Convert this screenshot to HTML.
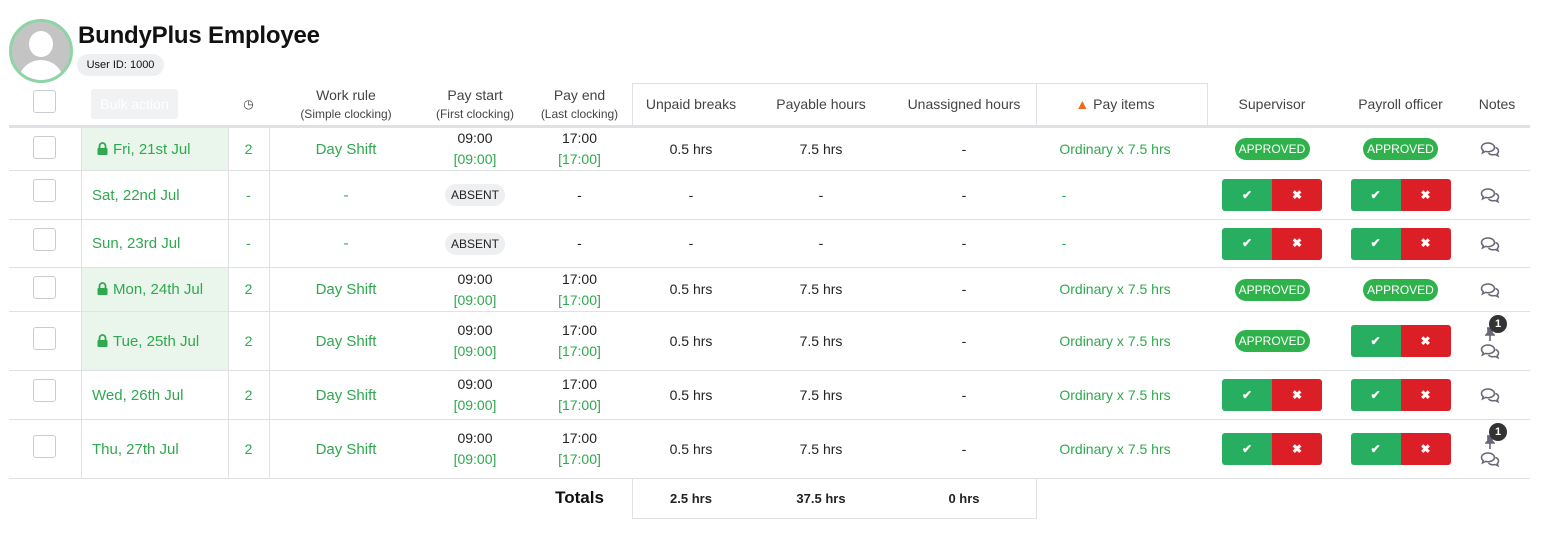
<!DOCTYPE html>
<html><head><meta charset="utf-8"><style>
*{box-sizing:border-box;margin:0;padding:0}
body{width:1551px;height:537px;background:#fff;font-family:"Liberation Sans",sans-serif;font-size:14px;color:#222;position:relative;overflow:hidden}
.a{position:absolute}
.r{position:absolute;left:9px;width:1521px;border-bottom:1px solid #dfe1e5}
.c{position:absolute;top:0;height:100%;display:flex;flex-direction:column;align-items:center;justify-content:center;text-align:center;line-height:21px}
.g{color:#2fa84f}
.cb{width:23px;height:23px;border:1px solid #c8ccd0;border-radius:3px;background:#fff}
.vl{position:absolute;top:0;height:100%;width:1px;background:#dfe1e5}
.ap{background:#2fb24c;color:#fff;font-size:12px;border-radius:11px;height:22px;width:75px;line-height:22px}
.ab{background:#eeeff1;color:#222;font-size:12px;border-radius:11px;height:22px;width:60px;line-height:22px}
.bt{display:flex;width:100px;height:32px;border-radius:3px;overflow:hidden}
.bt span{flex:1;color:#fff;font-size:12px;font-weight:bold;display:flex;align-items:center;justify-content:center}
.bt .y{background:#27ae60}.bt .n{background:#dc1f26}
.hd{position:absolute;top:0;height:100%;display:flex;flex-direction:column;align-items:center;justify-content:center;text-align:center;color:#444}
.sm{font-size:12px;margin-top:4px}
</style></head><body>
<div class="a" style="left:9px;top:19px;width:64px;height:64px;border-radius:50%;border:3px solid #8fd4a4;background:#c4c4c4;overflow:hidden">
<div class="a" style="left:17px;top:9px;width:24px;height:26px;border-radius:50%;background:#fff"></div>
<div class="a" style="left:6px;top:38px;width:46px;height:30px;border-radius:23px 23px 0 0;background:#fff"></div></div>
<div class="a" style="left:78px;top:22px;font-size:24px;font-weight:bold;color:#111;letter-spacing:-0.2px">BundyPlus Employee</div>
<div class="a" style="left:77px;top:54px;width:87px;height:22px;border-radius:11px;background:#eeeff1;font-size:11px;line-height:22px;text-align:center;color:#111">User ID: 1000</div>

<div class="a" style="left:632px;top:83px;width:576px;height:44px;border:1px solid #dfe1e5;border-bottom:none"></div>
<div class="a" style="left:1036px;top:83px;width:1px;height:44px;background:#dfe1e5"></div>
<div class="r" style="top:83px;height:45px;border-bottom:3px solid #dfe1e5">
<div class="a" style="left:24px;top:7px"><div class="cb"></div></div>
<div class="a" style="left:82px;top:6px;width:87px;height:30px;background:#f1f2f4;border-radius:3px;color:#fff;font-size:14px;line-height:30px;text-align:center">Bulk action</div>
<div class="hd" style="left:219px;width:41px"><span style="font-size:12px">◷</span></div>
<div class="hd" style="left:260px;width:154px"><div>Work rule</div><div class="sm">(Simple clocking)</div></div>
<div class="hd" style="left:414px;width:104px"><div>Pay start</div><div class="sm">(First clocking)</div></div>
<div class="hd" style="left:518px;width:105px"><div>Pay end</div><div class="sm">(Last clocking)</div></div>
<div class="hd" style="left:623px;width:118px">Unpaid breaks</div>
<div class="hd" style="left:741px;width:142px">Payable hours</div>
<div class="hd" style="left:883px;width:144px">Unassigned hours</div>
<div class="hd" style="left:1027px;width:158px"><div><span style="color:#f06a1d">▲</span> Pay items</div></div>
<div class="hd" style="left:1198px;width:130px">Supervisor</div>
<div class="hd" style="left:1328px;width:127px">Payroll officer</div>
<div class="hd" style="left:1455px;width:66px">Notes</div>
</div>

<div id="rows"></div>
<script>
const rows=[
[128,43,"Fri, 21st Jul",1,1,1,1,0],
[171,49,"Sat, 22nd Jul",0,0,0,0,0],
[220,48,"Sun, 23rd Jul",0,0,0,0,0],
[268,44,"Mon, 24th Jul",1,1,1,1,0],
[312,59,"Tue, 25th Jul",1,1,1,0,1],
[371,49,"Wed, 26th Jul",0,1,0,0,0],
[420,59,"Thu, 27th Jul",0,1,0,0,1]];
const btn='<div class="bt"><span class="y">✔</span><span class="n">✖</span></div>';
const ap='<div class="ap">APPROVED</div>';
const chat='<svg width="20" height="16" viewBox="0 0 20 16"><path d="M8 2C4 2 1.5 4 1.5 6.5c0 1.3.7 2.4 1.8 3.1L2.5 12l3-1.6c.8.2 1.6.3 2.5.3 4 0 6.5-2 6.5-4.2S12 2 8 2z" fill="#fff" stroke="#667" stroke-width="1.5"/><path d="M15.5 6.5c1.8.7 3 2 3 3.6 0 1-.5 1.9-1.3 2.5l.8 2.2-2.8-1.3c-.7.2-1.5.3-2.2.3-2 0-3.6-.7-4.5-1.8" fill="none" stroke="#667" stroke-width="1.5"/></svg>';
const pin='<svg width="10" height="14" viewBox="0 0 10 14"><path d="M2 1h6M3 1v5L1 8h8L7 6V1M5 8v6" fill="#667" stroke="#667" stroke-width="1.6"/></svg>';
let h='';
for(const [t,ht,d,lock,work,sup,po,pn] of rows){
 h+=`<div class="r" style="top:${t}px;height:${ht}px">`;
 if(lock)h+=`<div class="a" style="left:72px;top:0;width:147px;height:100%;background:#eaf6ec"></div>`;
 h+=`<div class="vl" style="left:72px"></div><div class="vl" style="left:219px"></div><div class="vl" style="left:260px"></div>`;
 h+=`<div class="a" style="left:24px;top:${ht>50?15:8}px"><div class="cb"></div></div>`;
 h+=`<div class="c g" style="left:72px;width:147px;font-size:15px;align-items:flex-start;padding-left:${lock?16:11}px">${lock?'<span><svg width="11" height="13" viewBox="0 0 11 13" style="vertical-align:-1px;margin-right:5px"><path d="M2.5 6V4a3 3 0 0 1 6 0v2" fill="none" stroke="#2fa84f" stroke-width="1.8"/><rect x="0.5" y="6" width="10" height="7" rx="1" fill="#2fa84f"/></svg>'+d+'</span>':d}</div>`;
 h+=`<div class="c g" style="left:219px;width:41px">${work?2:'-'}</div>`;
 h+=`<div class="c g" style="left:260px;width:154px;font-size:15px">${work?'Day Shift':'-'}</div>`;
 h+=`<div class="c" style="left:414px;width:104px">${work?'<div>09:00</div><div class="g">[09:00]</div>':'<div class="ab">ABSENT</div>'}</div>`;
 h+=`<div class="c" style="left:518px;width:105px">${work?'<div>17:00</div><div class="g">[17:00]</div>':'-'}</div>`;
 h+=`<div class="c" style="left:623px;width:118px">${work?'0.5 hrs':'-'}</div>`;
 h+=`<div class="c" style="left:741px;width:142px">${work?'7.5 hrs':'-'}</div>`;
 h+=`<div class="c" style="left:883px;width:144px">-</div>`;
 h+=`<div class="c g" style="left:1027px;width:${work?158:56}px">${work?'Ordinary x 7.5 hrs':'-'}</div>`;
 h+=`<div class="c" style="left:1198px;width:130px">${sup?ap:btn}</div>`;
 h+=`<div class="c" style="left:1328px;width:127px">${po?ap:btn}</div>`;
 h+=`<div class="c" style="left:1455px;width:52px">${pn?'<div style="position:relative;height:20px;width:20px;line-height:14px;padding-top:4px">'+pin+'<span style="position:absolute;left:9px;top:-8px;width:18px;height:18px;border-radius:50%;background:#333;color:#fff;font-size:11px;line-height:18px;font-weight:bold">1</span></div>':''}${chat}</div>`;
 h+='</div>';
}
document.getElementById('rows').innerHTML=h;
</script>
<div class="a" style="left:632px;top:479px;width:405px;height:40px;border:1px solid #dfe1e5;border-top:none"></div>
<div class="a" style="left:527px;top:488px;width:105px;text-align:center;font-size:17px;font-weight:bold;color:#111">Totals</div>
<div class="a" style="left:632px;top:491px;width:118px;text-align:center;font-size:13px;font-weight:bold">2.5 hrs</div>
<div class="a" style="left:750px;top:491px;width:142px;text-align:center;font-size:13px;font-weight:bold">37.5 hrs</div>
<div class="a" style="left:892px;top:491px;width:144px;text-align:center;font-size:13px;font-weight:bold">0 hrs</div>
</body></html>
